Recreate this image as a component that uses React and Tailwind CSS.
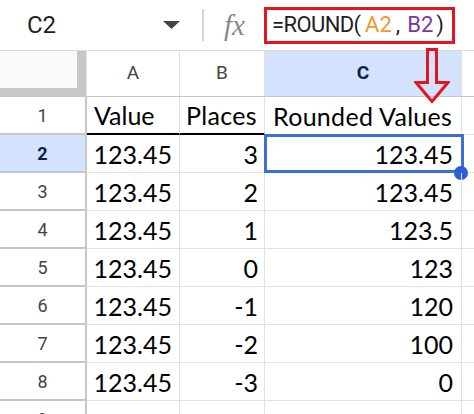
import React from 'react';

const rows = [
  { n: 1, a: 'Value', b: 'Places', c: 'Rounded Values', head: true },
  { n: 2, a: '123.45', b: '3', c: '123.45' },
  { n: 3, a: '123.45', b: '2', c: '123.45' },
  { n: 4, a: '123.45', b: '1', c: '123.5' },
  { n: 5, a: '123.45', b: '0', c: '123' },
  { n: 6, a: '123.45', b: '-1', c: '120' },
  { n: 7, a: '123.45', b: '-2', c: '100' },
  { n: 8, a: '123.45', b: '-3', c: '0' },
  { n: 9, a: '', b: '', c: '' },
];

const cellFont = { fontFamily: 'Lato, "Open Sans", sans-serif' };

export default function App() {
  return (
    <div className="relative w-[474px] h-[414px] overflow-hidden bg-white" style={{ fontFamily: 'Roboto, "Liberation Sans", sans-serif' }}>
      {/* formula bar */}
      <div className="flex items-center h-[51px] border-b border-[#dadce0]">
        <div className="w-[163px] pl-[27px] text-[24px] text-[#1f1f1f] leading-none">C2</div>
        <svg width="17" height="8" viewBox="0 0 17 8"><path d="M0 0h17L8.5 8z" fill="#444" /></svg>
        <div className="ml-[22px] w-[2px] h-[32px] bg-[#d5d7da]" />
        <div className="ml-[20px] w-[30px] text-[29px] italic leading-none text-[#85888c]" style={{ fontFamily: '"Liberation Serif", serif' }}>fx</div>
        <div className="ml-[10px] w-[191px] h-[37px] border-[3px] border-[#e3161d] pl-[5px] flex items-center text-[22px] leading-none text-[#1f1f1f] whitespace-nowrap">
          <span className="tracking-[-0.6px]">=ROUND</span>
          <span>(</span>
          <span className="ml-[4px] text-[#ee9b2d]">A2</span>
          <span className="ml-[4px]">,</span>
          <span className="ml-[7px] text-[#7b3a98]">B2</span>
          <span className="ml-[3px]">)</span>
        </div>
      </div>

      {/* column header */}
      <div className="flex h-[46px] border-b border-[#c7c7c7]">
        <div className="w-[87px] border-r border-[#e1e1e1]">
          <div className="w-[86px] h-full bg-[#f8f9fa] border-r-[9px] border-b-[8px] border-[#c7c7c7]" />
        </div>
        <div className="w-[93px] flex items-center justify-center border-r border-[#e1e1e1] text-[19px] text-[#444]">A</div>
        <div className="w-[85px] flex items-center justify-center border-r border-[#e1e1e1] text-[19px] text-[#444]">B</div>
        <div className="w-[197px] flex items-center justify-center border-r border-[#e1e1e1] bg-[#d3e3fd] text-[19px] font-bold text-[#0b1f4a]">C</div>
        <div className="flex-1" />
      </div>

      {/* rows */}
      {rows.map((r) => (
        <div key={r.n} className="flex h-[38px]">
          <div className={`w-[87px] flex items-center justify-center border-r-2 border-b-2 border-[#c7c7c7] text-[18px] ${r.n === 2 ? 'bg-[#d3e3fd] font-bold text-[#0b1f4a]' : 'text-[#444]'}`}>
            {r.n}
          </div>
          <div className={`w-[93px] flex items-end px-[7px] pb-[5px] border-r border-[#e1e1e1] text-[25px] leading-none text-black ${r.head ? 'border-b-2 border-b-black justify-start' : 'border-b justify-end'}`} style={cellFont}>
            {r.a}
          </div>
          <div className={`w-[85px] flex items-end px-[6px] pb-[5px] border-r border-[#e1e1e1] text-[25px] leading-none text-black ${r.head ? 'border-b-2 border-b-black justify-start tracking-[0.3px]' : 'border-b justify-end'}`} style={cellFont}>
            {r.b}
          </div>
          <div className={`relative w-[197px] flex items-end px-[8px] pb-[5px] border-r border-b border-[#e1e1e1] text-[25px] leading-none text-black whitespace-nowrap ${r.head ? 'justify-start tracking-[0.3px]' : 'justify-end'}`} style={cellFont}>
            {r.c}
            {r.n === 2 && (
              <>
                <div className="absolute -left-[1px] -top-[1px] w-[200px] h-[39px] border-[3px] border-[#3d6fd9]" />
                <div className="absolute -right-[7px] -bottom-[8px] w-[14px] h-[14px] rounded-full bg-[#2a5fd6]" />
              </>
            )}
          </div>
          <div className="flex-1 border-b border-[#e1e1e1]" />
        </div>
      ))}

      {/* arrow */}
      <svg className="absolute left-[414px] top-[48px]" width="36" height="56" viewBox="0 0 36 56">
        <path d="M13.5 1.5h9v33h11.5L18 53.5 2 34.5h11.5z" fill="none" stroke="#e3161d" strokeWidth="3" strokeLinejoin="miter" />
      </svg>
    </div>
  );
}
